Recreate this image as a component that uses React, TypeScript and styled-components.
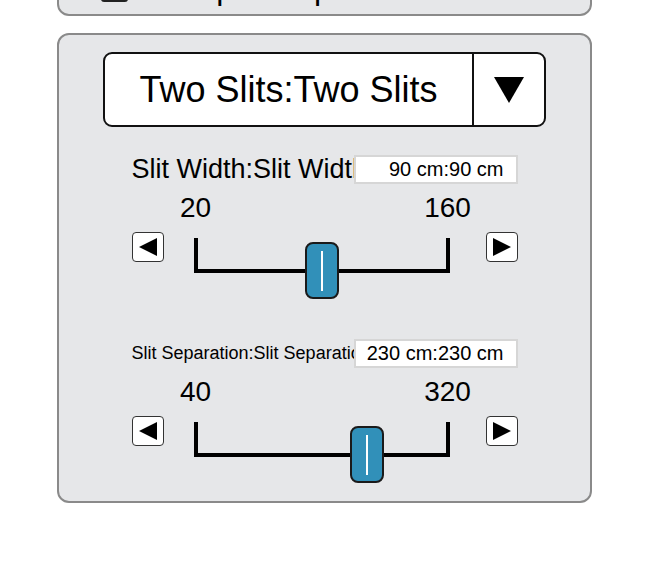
import React from "react";
import styled, { createGlobalStyle } from "styled-components";

const GlobalStyle = createGlobalStyle`
  html, body {
    margin: 0;
    padding: 0;
    background: #fff;
  }
  body {
    font-family: "Liberation Sans", Arial, sans-serif;
    color: #000;
    overflow: hidden;
  }
`;

const Page = styled.div`
  display: flex;
  flex-direction: column;
  gap: 17px;
  padding-left: 57px;
`;

const Panel = styled.div`
  box-sizing: border-box;
  width: 535px;
  background: #e6e7e9;
  border: 2px solid #8a8a8a;
  border-radius: 12px;
`;

const TopPanel = styled(Panel)`
  margin-top: -39px;
  padding: 12px 20px 12px 42px;
  display: flex;
  align-items: center;
`;

const CheckBox = styled.div`
  box-sizing: border-box;
  width: 27px;
  height: 27px;
  border: 2px solid #222;
  border-radius: 3px;
  background: #fff;
`;

const CheckLabel = styled.span`
  margin-left: 33px;
  font-size: 32px;
  line-height: 27px;
  white-space: nowrap;
`;

const ControlPanel = styled(Panel)`
  display: flex;
  flex-direction: column;
  align-items: center;
  gap: 28px;
  padding: 17px 0 6px;
`;

const Dropdown = styled.div`
  box-sizing: border-box;
  width: 443px;
  height: 75px;
  display: flex;
  background: #fff;
  border: 2px solid #111;
  border-radius: 9px;
`;

const DropdownText = styled.div`
  flex: 1;
  display: flex;
  align-items: center;
  justify-content: center;
  font-size: 36px;
`;

const DropdownArrow = styled.div`
  box-sizing: border-box;
  width: 72px;
  display: flex;
  align-items: center;
  justify-content: center;
  border-left: 2px solid #111;
`;

const SliderBlock = styled.div`
  width: 386px;
  display: flex;
  flex-direction: column;
`;

const LabelRow = styled.div`
  display: flex;
  align-items: center;
  height: 29px;
`;

const Label = styled.div<{ $size: number }>`
  flex: 1;
  min-width: 0;
  overflow: hidden;
  white-space: nowrap;
  font-size: ${({ $size }) => $size}px;
`;

const ValueBox = styled.div`
  box-sizing: border-box;
  width: 164px;
  height: 29px;
  padding-right: 12px;
  display: flex;
  align-items: center;
  justify-content: flex-end;
  background: #fff;
  border: 2px solid #d6d6d6;
  font-size: 20px;
`;

const RangeRow = styled.div`
  display: flex;
  justify-content: space-between;
  margin-top: 10px;
  padding: 0 68px 0 62px;
  font-size: 28px;
  line-height: 28px;
`;

const RangeValue = styled.span`
  width: 4px;
  display: flex;
  justify-content: center;
  white-space: nowrap;
`;

const SliderRow = styled.div`
  display: flex;
  align-items: flex-start;
  height: 79px;
  margin-top: 10px;
`;

const StepButton = styled.button`
  box-sizing: border-box;
  width: 32px;
  height: 30px;
  padding: 0;
  display: flex;
  align-items: center;
  justify-content: center;
  background: #fff;
  border: 1.5px solid #333;
  border-radius: 4px;
`;

const TrackArea = styled.div`
  flex: 1;
  padding: 6px 36px 0 30px;
`;

const Track = styled.div`
  position: relative;
  box-sizing: border-box;
  height: 35px;
  border: 4px solid #000;
  border-top: none;
`;

const Thumb = styled.div`
  position: absolute;
  top: 4px;
  box-sizing: border-box;
  width: 34px;
  height: 57px;
  background: #3190b9;
  border: 2px solid #1a1a1a;
  border-radius: 8px;

  &::after {
    content: "";
    position: absolute;
    top: 7px;
    bottom: 6px;
    left: 50%;
    width: 2px;
    margin-left: -1px;
    background: #fff;
  }
`;

const TriangleLeft = () => (
  <svg width="18" height="18" viewBox="0 0 18 18">
    <polygon points="0,9 18,0 18,18" fill="#000" />
  </svg>
);

const TriangleRight = () => (
  <svg width="18" height="18" viewBox="0 0 18 18">
    <polygon points="18,9 0,0 0,18" fill="#000" />
  </svg>
);

interface SliderProps {
  label: string;
  labelSize: number;
  unit: string;
  min: number;
  max: number;
  value: number;
}

const TRACK_SPAN = 252;

const NumberSlider: React.FC<SliderProps> = ({ label, labelSize, unit, min, max, value }) => {
  const fraction = (value - min) / (max - min);
  const text = `${value} ${unit}`;
  return (
    <SliderBlock>
      <LabelRow>
        <Label $size={labelSize}>
          {label}:{label}
        </Label>
        <ValueBox>
          {text}:{text}
        </ValueBox>
      </LabelRow>
      <RangeRow>
        <RangeValue>{min}</RangeValue>
        <RangeValue>{max}</RangeValue>
      </RangeRow>
      <SliderRow>
        <StepButton aria-label="decrease">
          <TriangleLeft />
        </StepButton>
        <TrackArea>
          <Track>
            <Thumb style={{ left: fraction * TRACK_SPAN - 19 }} />
          </Track>
        </TrackArea>
        <StepButton aria-label="increase">
          <TriangleRight />
        </StepButton>
      </SliderRow>
    </SliderBlock>
  );
};

export default function App() {
  return (
    <>
      <GlobalStyle />
      <Page>
        <TopPanel>
          <CheckBox />
          <CheckLabel>Scope Graph</CheckLabel>
        </TopPanel>
        <ControlPanel>
          <Dropdown>
            <DropdownText>Two Slits:Two Slits</DropdownText>
            <DropdownArrow>
              <svg width="30" height="26" viewBox="0 0 30 26">
                <polygon points="0,0 30,0 15,26" fill="#000" />
              </svg>
            </DropdownArrow>
          </Dropdown>
          <NumberSlider label="Slit Width" labelSize={27} unit="cm" min={20} max={160} value={90} />
          <NumberSlider label="Slit Separation" labelSize={18} unit="cm" min={40} max={320} value={230} />
        </ControlPanel>
      </Page>
    </>
  );
}
